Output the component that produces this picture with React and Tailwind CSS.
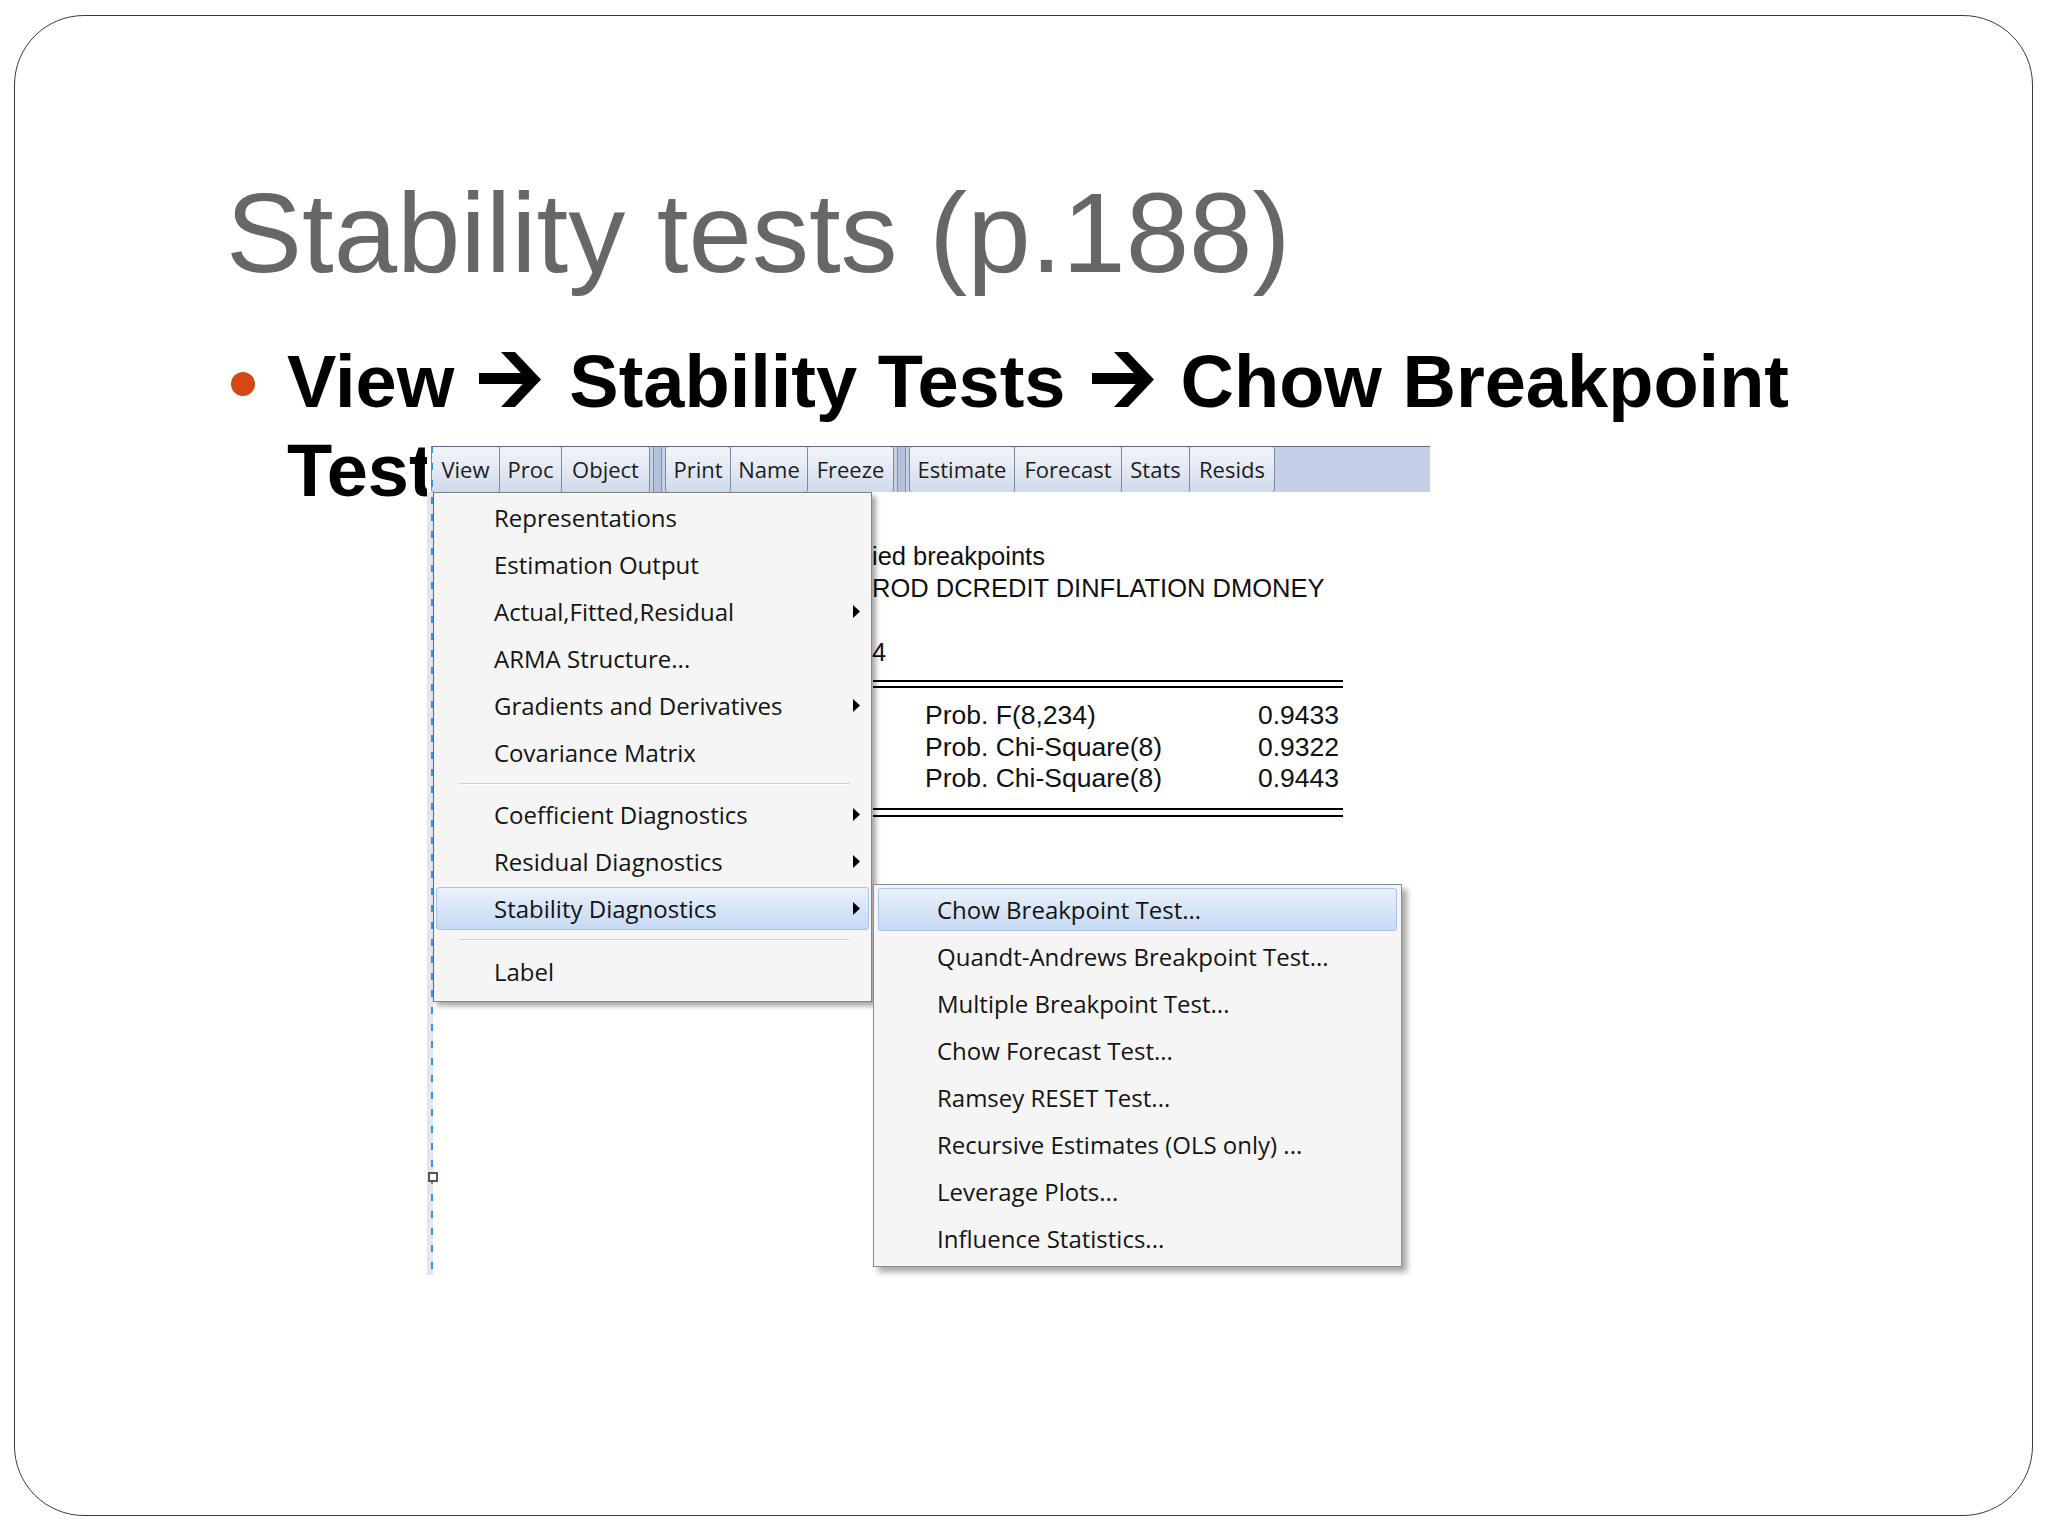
import React from 'react';

const sans = { fontFamily: '"Liberation Sans", Arial, sans-serif' };
const ui = { fontFamily: '"Open Sans", "Noto Sans", sans-serif' };

const barGroups = [
  [['View', 69], ['Proc', 62], ['Object', 88]],
  [['Print', 66], ['Name', 77], ['Freeze', 86]],
  [['Estimate', 106], ['Forecast', 107], ['Stats', 68], ['Resids', 85]],
];

const viewItems = [
  { label: 'Representations' },
  { label: 'Estimation Output' },
  { label: 'Actual,Fitted,Residual', sub: true },
  { label: 'ARMA Structure...' },
  { label: 'Gradients and Derivatives', sub: true },
  { label: 'Covariance Matrix' },
  { sep: true, h: 'h-[15px]' },
  { label: 'Coefficient Diagnostics', sub: true },
  { label: 'Residual Diagnostics', sub: true },
  { label: 'Stability Diagnostics', sub: true, active: true },
  { sep: true, h: 'h-[16px]' },
  { label: 'Label' },
];

const stabilityItems = [
  'Chow Breakpoint Test...',
  'Quandt-Andrews Breakpoint Test...',
  'Multiple Breakpoint Test...',
  'Chow Forecast Test...',
  'Ramsey RESET Test...',
  'Recursive Estimates (OLS only) ...',
  'Leverage Plots...',
  'Influence Statistics...',
];

const probs = [
  ['Prob. F(8,234)', '0.9433'],
  ['Prob. Chi-Square(8)', '0.9322'],
  ['Prob. Chi-Square(8)', '0.9443'],
];

function Arrow({ className }) {
  return (
    <svg viewBox="0 0 62 55" className={className}>
      <rect x="0" y="21" width="52" height="11" fill="#000" />
      <polygon points="22,0 36,0 62,27.5 36,55 22,55 48,27.5" fill="#000" />
    </svg>
  );
}

function SubArrow() {
  return (
    <svg viewBox="0 0 7 13" className="ml-auto mr-[8px] w-[7px] h-[13px]">
      <polygon points="0,0 7,6.5 0,13" fill="#000" />
    </svg>
  );
}

function MenuRow({ label, sub, active, pl }) {
  return (
    <div className="h-[47px] px-[2px] py-[2px]">
      <div
        className={
          'h-full flex items-center rounded-[3px] border ' +
          (active
            ? 'border-[#a9c5eb] bg-gradient-to-b from-[#eaf1fc] to-[#c6d9f4]'
            : 'border-transparent')
        }
      >
        <span className={pl}>{label}</span>
        {sub && <SubArrow />}
      </div>
    </div>
  );
}

function DoubleRule({ gap }) {
  return (
    <div className="w-[470px] ml-[1px]">
      <div className="h-[2px] bg-black" />
      <div className={'h-[2px] bg-black ' + gap} />
    </div>
  );
}

function Toolbar() {
  return (
    <div className="ml-[4px] mt-[1px] h-[46px] flex border-t border-[#5d6a80] bg-[#c3d0e5] text-[22px] text-[#1c1c1c]" style={ui}>
      {barGroups.map((group, gi) => (
        <React.Fragment key={gi}>
          {gi > 0 && (
            <div className="w-[15px] h-full flex justify-center">
              <div className="w-[9px] h-full border-x border-[#8391a8] bg-[#b3c2da]" />
            </div>
          )}
          {group.map(([name, w], i) => (
            <div
              key={name}
              style={{ width: w }}
              className={
                'h-full flex items-center justify-center rounded-[3px] border-r border-[#7d8aa0] bg-gradient-to-b from-[#f1f4fa] via-[#e3e9f4] to-[#d0dae9] ' +
                (i === 0 ? 'border-l' : '')
              }
            >
              {name}
            </div>
          ))}
        </React.Fragment>
      ))}
    </div>
  );
}

function EviewsShot() {
  return (
    <div className="absolute left-[427px] top-[445px] w-[1003px] h-[830px] bg-white flex flex-col">
      <Toolbar />

      <div className="relative flex-1 flex">
        {/* window edge */}
        <div className="w-[6px] bg-[#e0e7f1]" />

        {/* equation output, partly hidden by the menus */}
        <div className="ml-[439px] pt-[48px] text-[#111]" style={sans}>
          <div className="text-[25.5px] leading-[32px] whitespace-pre">
            <div>ied breakpoints</div>
            <div>ROD DCREDIT DINFLATION DMONEY</div>
            <div>&nbsp;</div>
            <div>4</div>
          </div>
          <div className="mt-[12px]">
            <DoubleRule gap="mt-[4px]" />
          </div>
          <div className="mt-[12px] ml-[53px] w-[414px] text-[26.5px] leading-[31.5px]">
            {probs.map(([k, v], i) => (
              <div key={i} className="flex justify-between">
                <span>{k}</span>
                <span>{v}</span>
              </div>
            ))}
          </div>
          <div className="mt-[13px]">
            <DoubleRule gap="mt-[5px]" />
          </div>
        </div>

        {/* View menu */}
        <div
          className="absolute left-[6px] top-0 w-[439px] h-[510px] pt-[1px] pb-[6px] border border-[#858585] border-l-[#6a6a6a] bg-[#f5f5f5] text-[24px] text-[#141414] shadow-[4px_4px_5px_rgba(0,0,0,0.35)]"
          style={ui}
        >
          {viewItems.map((it, i) =>
            it.sep ? (
              <div key={i} className={it.h + ' flex items-center pl-[25px] pr-[21px]'}>
                <div className="w-full h-[2px] border-t border-[#d2d2d2] border-b border-b-white" />
              </div>
            ) : (
              <MenuRow key={i} {...it} pl="pl-[57px]" />
            )
          )}
        </div>

        {/* Stability Diagnostics submenu */}
        <div
          className="absolute left-[446px] top-[392px] w-[529px] h-[383px] pt-[1px] pb-[4px] px-[2px] border border-[#8c8c8c] bg-[#f5f5f5] text-[24px] text-[#141414] shadow-[5px_5px_6px_rgba(0,0,0,0.35)]"
          style={ui}
        >
          {stabilityItems.map((label, i) => (
            <MenuRow key={i} label={label} active={i === 0} pl="pl-[58px]" />
          ))}
        </div>
      </div>

      {/* selection outline with its handle */}
      <div className="absolute left-[4px] top-[1px] w-[2px] h-[829px] bg-[repeating-linear-gradient(to_bottom,#3d8fe6_0px,#3d8fe6_7px,transparent_7px,transparent_17px)]" />
      <div className="absolute left-[1px] top-[727px] w-[10px] h-[10px] border-2 border-[#555] bg-white" />
    </div>
  );
}

export default function App() {
  return (
    <div className="relative w-[2048px] h-[1536px] bg-white overflow-hidden" style={sans}>
      <div className="pt-[15px] pl-[14px]">
        <div className="w-[2019px] h-[1501px] rounded-[70px] border border-[#3a3a3a] bg-white">
          <h1 className="ml-[211px] mt-[160px] text-[114px] leading-none font-normal text-[#676767]">
            Stability tests (p.188)
          </h1>
          <div className="mt-[47px] ml-[216px] flex">
            <span className="mt-[35px] w-[24px] h-[24px] shrink-0 rounded-full bg-[#d34817]" />
            <div className="ml-[32px] text-[74px] leading-[89px] font-bold text-black">
              <div className="whitespace-nowrap">
                View
                <Arrow className="inline-block align-baseline w-[62px] h-[55px] ml-[25px] mr-[28px]" />
                Stability Tests
                <Arrow className="inline-block align-baseline w-[62px] h-[55px] ml-[26px] mr-[27px]" />
                Chow Breakpoint
              </div>
              <div>Test</div>
            </div>
          </div>
        </div>
      </div>
      <EviewsShot />
    </div>
  );
}
